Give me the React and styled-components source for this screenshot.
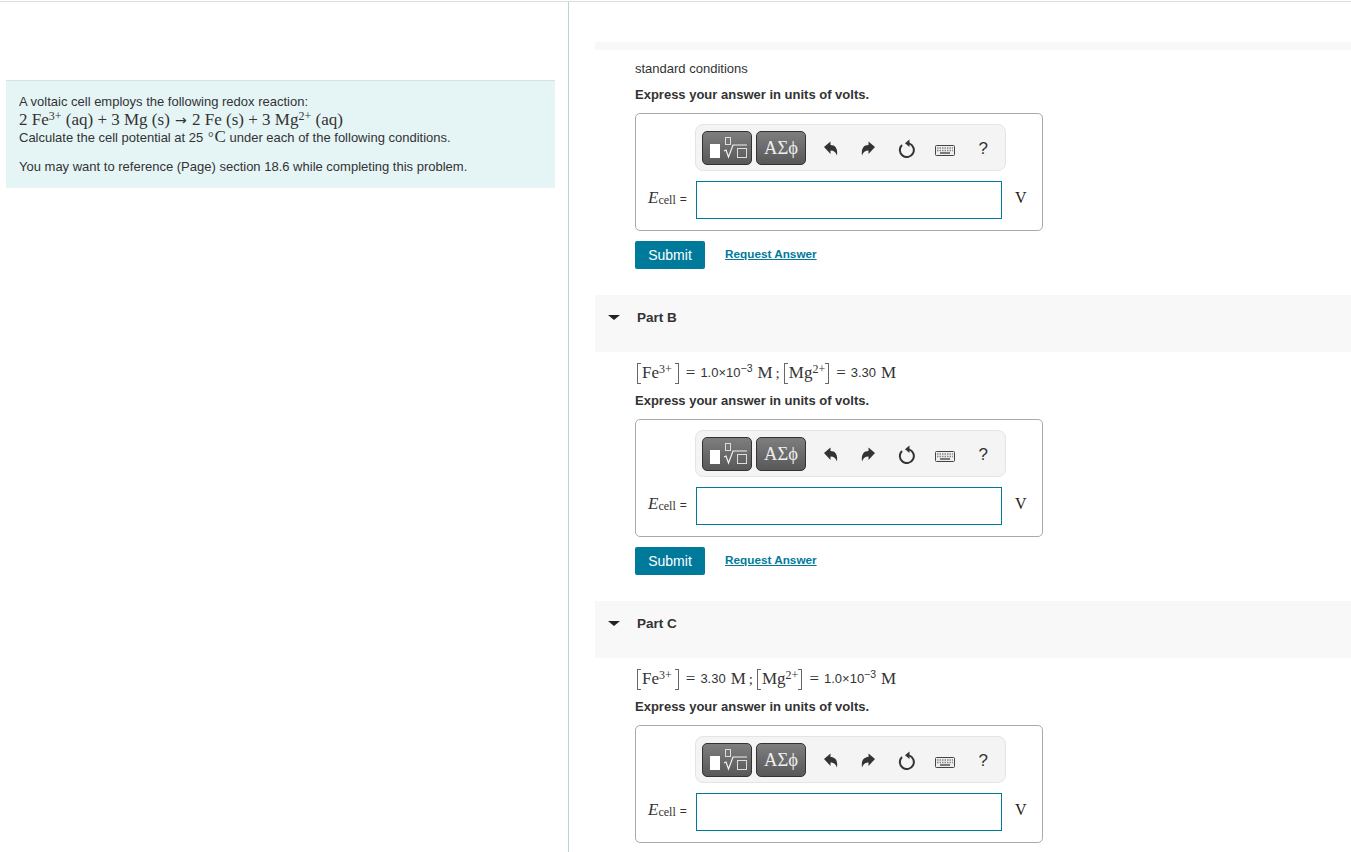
import styled, { createGlobalStyle } from "styled-components";

const parts = [
	{ id: "A", prompt: "standard conditions", hasActions: true },
	{
		id: "B",
		hasActions: true,
		first: { value: "1.0×10", power: "−3" },
		second: { value: "3.30" },
	},
	{
		id: "C",
		first: { value: "3.30" },
		second: { value: "1.0×10", power: "−3" },
	},
];

const GlobalStyle = createGlobalStyle`
	html, body {
		margin: 0;
		padding: 0;
		background: #fff;
	}
	body {
		font-family: "Liberation Sans", Arial, sans-serif;
		color: #333;
	}
`;

const Page = styled.div`
	display: flex;
	height: 850px;
	margin-top: 1px;
	border-top: 1px solid #dcdcdc;
	overflow: hidden;
`;

const LeftColumn = styled.div`
	width: 568px;
	flex: none;
	border-right: 1px solid #bfd0da;
	padding-top: 78px;
`;

const Intro = styled.div`
	margin: 0 13px 0 6px;
	height: 108px;
	padding: 12px 13px 0;
	box-sizing: border-box;
	background: #e5f5f6;
	border-top: 1px solid #d4e2e4;
	font-size: 13px;
`;

const IntroLine = styled.div`
	height: ${(props) => props.$height || 18}px;
	line-height: ${(props) => props.$height || 18}px;
	white-space: nowrap;
`;

const Spacer = styled.div`
	height: 12px;
`;

const Serif = styled.span`
	font-family: "Liberation Serif", "Times New Roman", serif;
	font-size: 17px;
	color: #333;
`;

const Sup = styled.sup`
	font-size: 12px;
	line-height: 0;
	vertical-align: 5px;
`;

const Power = styled.sup`
	font-size: 10.5px;
	line-height: 0;
	vertical-align: 5px;
`;

const Degree = styled.span`
	font-family: "Liberation Serif", serif;
	font-size: 14px;
	line-height: 0;
	margin: 0 1px 0 1px;
`;

const RightColumn = styled.div`
	flex: 1;
	padding: 40px 0 0 26px;
	min-width: 0;
`;

const PartHeader = styled.div`
	display: flex;
	align-items: center;
	height: 57px;
	padding: 0 0 12px 13px;
	box-sizing: border-box;
	background: #f8f8f8;
	font-size: 13.5px;
	font-weight: bold;
`;

const HeaderStub = styled.div`
	height: 8px;
	background: #f8f8f8;
`;

const Triangle = styled.span`
	width: 0;
	height: 0;
	border-left: 6px solid transparent;
	border-right: 6px solid transparent;
	border-top: 5px solid #222;
	margin-right: 17px;
`;

const PartBody = styled.div`
	padding: 8px 0 26px 40px;
`;

const Prompt = styled.div`
	height: 20px;
	line-height: 22px;
	font-size: 13px;
	margin-bottom: 6px;
`;

const MathPrompt = styled.div`
	display: flex;
	align-items: center;
	height: 26px;
	line-height: 26px;
	font-size: 13px;
	margin: 0 0 4px 2px;
	white-space: nowrap;
`;

const Bracket = styled.span`
	width: 3px;
	height: 19px;
	border: 1px solid #666;
	border-width: ${(props) => (props.$close ? "1px 1px 1px 0" : "1px 0 1px 1px")};
	margin-left: ${(props) => props.$gap || 0}px;
	margin-right: ${(props) => (props.$close ? "0" : "1px")};
`;

const Equals = styled(Serif)`
	margin: 0 5px 0 7px;
`;

const Molar = styled(Serif)`
	margin-left: 5px;
`;

const Semicolon = styled(Serif)`
	margin: 0 4px 0 3px;
	font-size: 15px;
`;

const Arrow = styled.span`
	font-family: "DejaVu Sans", sans-serif;
	font-size: 14px;
	margin: 0 1px;
`;

const Instruction = styled.div`
	height: 20px;
	line-height: 22px;
	font-size: 13px;
	font-weight: bold;
	margin-bottom: 9px;
`;

const AnswerBox = styled.div`
	width: 408px;
	height: 118px;
	box-sizing: border-box;
	border: 1px solid #aaa;
	border-radius: 5px;
	padding: 10px 0 0 59px;
`;

const Toolbar = styled.div`
	display: flex;
	align-items: center;
	width: 311px;
	height: 47px;
	box-sizing: border-box;
	padding-left: 6px;
	background: #f4f4f4;
	border: 1px solid #e4e4e4;
	border-radius: 8px;
`;

const TemplateButton = styled.button`
	display: flex;
	align-items: center;
	justify-content: center;
	width: 50px;
	height: 34px;
	margin-right: 4px;
	padding: 0;
	border: 1px solid #333;
	border-radius: 5px;
	background: linear-gradient(#7e7e7e, #585858);
	color: #eee;
	font-family: "Liberation Serif", serif;
	font-size: 18.5px;
`;

const SymbolButton = styled(TemplateButton)`
	padding-top: 2px;
	margin-right: 5px;
`;

const ToolIcon = styled.span`
	display: flex;
	align-items: center;
	justify-content: center;
	width: 38.25px;
	height: 34px;
	padding-top: ${(props) => props.$drop || 2}px;
	box-sizing: border-box;
	color: #333;
	font-size: 17px;
`;

const InputRow = styled.div`
	display: flex;
	align-items: center;
	margin: 10px 0 0 -59px;
`;

const Label = styled.div`
	width: 60px;
	padding: 0 0 4px 12px;
	box-sizing: border-box;
	font-family: "Liberation Serif", serif;
	font-size: 17px;
	white-space: nowrap;
`;

const Sub = styled.span`
	font-size: 12px;
	vertical-align: -1px;
`;

const LabelEquals = styled.span`
	font-family: "Liberation Sans", sans-serif;
	font-size: 12px;
	margin-left: 4px;
`;

const AnswerInput = styled.div`
	width: 306px;
	height: 38px;
	box-sizing: border-box;
	border: 1px solid #007a9b;
	background: #fff;
`;

const Unit = styled.div`
	margin-left: 13px;
	padding-bottom: 4px;
	font-family: "Liberation Serif", serif;
	font-size: 16px;
	color: #222;
`;

const Actions = styled.div`
	display: flex;
	align-items: flex-start;
	margin-top: 10px;
`;

const Submit = styled.button`
	width: 70px;
	height: 28px;
	padding: 0;
	border: none;
	border-radius: 2px;
	background: #007a9b;
	color: #fff;
	font-family: "Liberation Sans", sans-serif;
	font-size: 14px;
`;

const RequestLink = styled.a`
	margin: 6px 0 0 20px;
	color: #007a9b;
	font-size: 11.75px;
	font-weight: bold;
	text-decoration: underline;
`;

const MatrixIcon = () => (
	<svg width="46" height="30" viewBox="0 0 46 30">
		<rect x="6" y="11" width="10" height="14" fill="#fff" />
		<rect x="21.5" y="4.5" width="5" height="7" fill="none" stroke="#ddd" />
		<path d="M20 18l2 -1 2.500 7 4.500 -12h14" fill="none" stroke="#f2f2f2" strokeWidth="1.200" />
		<rect x="33.500" y="15.500" width="9" height="9" fill="none" stroke="#ddd" />
	</svg>
);

const UndoIcon = () => (
	<svg width="15" height="16" viewBox="0 0 15 16">
		<path d="M1 6L7.500 0.500v3.500c4.500 0 7.500 3 6.500 10.500-1.300-3.200-3-5-6.500-5v3.500z" fill="#333" />
	</svg>
);

const RedoIcon = () => (
	<svg width="15" height="16" viewBox="0 0 15 16">
		<path d="M14 6L7.500 0.500v3.500c-4.500 0-7.500 3-6.500 10.500 1.300-3.200 3-5 6.500-5v3.500z" fill="#333" />
	</svg>
);

const ResetIcon = () => (
	<svg width="18" height="19" viewBox="0 0 18 19">
		<path d="M11 4.400A7 7 0 1 1 4 6" fill="none" stroke="#333" strokeWidth="2" />
		<path d="M11.500 0.500v7.500l-4.500-3.800z" fill="#333" />
	</svg>
);

const KeyboardIcon = () => (
	<svg width="20" height="11" viewBox="0 0 20 11">
		<rect x="0.500" y="0.500" width="19" height="10" rx="1" fill="#eee" stroke="#444" />
		<path d="M2 3h16M2 5.500h16" stroke="#888" strokeWidth="1.500" strokeDasharray="1.500 1" />
		<path d="M5 8h10" stroke="#555" strokeWidth="1.500" />
	</svg>
);

const Ion = ({ symbol, charge, gap }) => (
	<>
		<Bracket />
		<Serif>
			{symbol}
			<Sup>{charge}</Sup>
		</Serif>
		<Bracket $close $gap={gap} />
	</>
);

const Quantity = ({ value, power }) => (
	<span>
		{value}
		{power && <Power>{power}</Power>}
	</span>
);

const Concentrations = ({ first, second }) => (
	<MathPrompt>
		<Ion symbol="Fe" charge="3+" gap={3} />
		<Equals>=</Equals>
		<Quantity {...first} />
		<Molar>M</Molar>
		<Semicolon>;</Semicolon>
		<Ion symbol="Mg" charge="2+" gap={0} />
		<Equals>=</Equals>
		<Quantity {...second} />
		<Molar>M</Molar>
	</MathPrompt>
);

const Part = ({ part }) => (
	<div>
		{part.first ? (
			<PartHeader>
				<Triangle />
				Part {part.id}
			</PartHeader>
		) : (
			<HeaderStub />
		)}
		<PartBody>
			{part.first ? (
				<Concentrations first={part.first} second={part.second} />
			) : (
				<Prompt>{part.prompt}</Prompt>
			)}
			<Instruction>Express your answer in units of volts.</Instruction>
			<AnswerBox>
				<Toolbar>
					<TemplateButton>
						<MatrixIcon />
					</TemplateButton>
					<SymbolButton>ΑΣϕ</SymbolButton>
					<ToolIcon>
						<UndoIcon />
					</ToolIcon>
					<ToolIcon>
						<RedoIcon />
					</ToolIcon>
					<ToolIcon>
						<ResetIcon />
					</ToolIcon>
					<ToolIcon $drop={5}>
						<KeyboardIcon />
					</ToolIcon>
					<ToolIcon>?</ToolIcon>
				</Toolbar>
				<InputRow>
					<Label>
						<i>E</i>
						<Sub>cell</Sub>
						<LabelEquals>=</LabelEquals>
					</Label>
					<AnswerInput />
					<Unit>V</Unit>
				</InputRow>
			</AnswerBox>
			{part.hasActions && (
				<Actions>
					<Submit>Submit</Submit>
					<RequestLink href="#">Request Answer</RequestLink>
				</Actions>
			)}
		</PartBody>
	</div>
);

const App = () => {
	return (
		<>
			<GlobalStyle />
			<Page>
				<LeftColumn>
					<Intro>
						<IntroLine>A voltaic cell employs the following redox reaction:</IntroLine>
						<IntroLine $height={17}>
							<Serif>
								2 Fe<Sup>3+</Sup> (aq) + 3 Mg (s) <Arrow>→</Arrow> 2 Fe (s) + 3 Mg<Sup>2+</Sup> (aq)
							</Serif>
						</IntroLine>
						<IntroLine>
							Calculate the cell potential at 25 <Degree>°</Degree>
							<Serif>C</Serif> under each of the following conditions.
						</IntroLine>
						<Spacer />
						<IntroLine>You may want to reference (Page) section 18.6 while completing this problem.</IntroLine>
					</Intro>
				</LeftColumn>
				<RightColumn>
					{parts.map((part) => (
						<Part key={part.id} part={part} />
					))}
				</RightColumn>
			</Page>
		</>
	);
};

export default App;
